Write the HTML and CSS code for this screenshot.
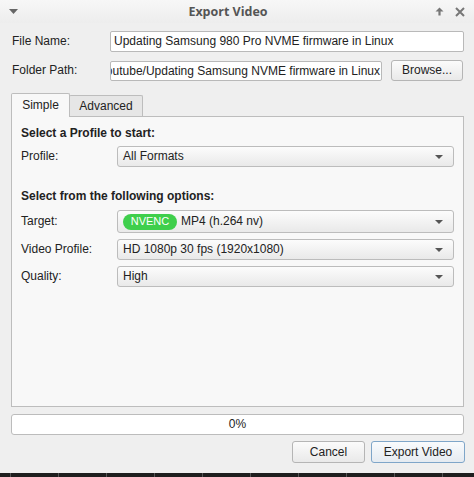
FILE: index.html
```html
<!DOCTYPE html>
<html>
<head>
<meta charset="utf-8">
<link rel="stylesheet" href="styles.css">
</head>
<body>
<div class="window">
  <div class="titlebar">
    <span class="tb-menu">
      <svg width="9" height="6" viewBox="0 0 9 6"><path d="M0 0 L9 0 L4.5 5 Z" fill="#666"/></svg>
    </span>
    <span class="tb-title">Export Video</span>
    <span class="tb-btns">
      <svg width="9" height="9" viewBox="0 0 9 9"><path d="M4.5 0.5 L8.5 4.5 L5.6 4.5 L5.6 8.5 L3.4 8.5 L3.4 4.5 L0.5 4.5 Z" fill="#777"/></svg>
      <svg width="10" height="10" viewBox="0 0 10 10"><path d="M1 1 L9 9 M9 1 L1 9" stroke="#777" stroke-width="2"/></svg>
    </span>
  </div>
  <div class="body">
    <div class="row r-file">
      <span class="lbl">File Name:</span>
      <div class="input wide">Updating Samsung 980 Pro NVME firmware in Linux</div>
    </div>
    <div class="row r-folder">
      <span class="lbl">Folder Path:</span>
      <div class="input path"><span class="path-text">outube/Updating Samsung NVME firmware in Linux</span></div>
      <div class="btn browse">Browse...</div>
    </div>
    <div class="tabs">
      <div class="tab active">Simple</div>
      <div class="tab">Advanced</div>
    </div>
    <div class="pane">
      <div class="heading h1">Select a Profile to start:</div>
      <div class="prow p-profile">
        <span class="plbl">Profile:</span>
        <div class="combo"><span>All Formats</span><i class="arrow"></i></div>
      </div>
      <div class="heading h2">Select from the following options:</div>
      <div class="prow p-target">
        <span class="plbl">Target:</span>
        <div class="combo tall"><span class="badge">NVENC</span><span>MP4 (h.264 nv)</span><i class="arrow"></i></div>
      </div>
      <div class="prow p-video">
        <span class="plbl">Video Profile:</span>
        <div class="combo"><span>HD 1080p 30 fps (1920x1080)</span><i class="arrow"></i></div>
      </div>
      <div class="prow p-quality">
        <span class="plbl">Quality:</span>
        <div class="combo"><span>High</span><i class="arrow"></i></div>
      </div>
    </div>
    <div class="progress">0%</div>
    <div class="buttons">
      <div class="btn cancel">Cancel</div>
      <div class="btn export">Export Video</div>
    </div>
  </div>
</div>
<div class="taskbar">
  <div class="seg first"></div><div class="seg"></div><div class="seg"></div><div class="seg"></div><div class="seg"></div><div class="seg"></div><div class="seg"></div><div class="seg"></div><div class="seg"></div><div class="seg"></div><div class="seg last"></div>
</div>
</body>
</html>
```

FILE: styles.css
```css
* { box-sizing: border-box; }
html, body { margin: 0; padding: 0; }
body {
  width: 474px;
  height: 477px;
  overflow: hidden;
  background: #efefef;
  font-family: "Liberation Sans", Arial, sans-serif;
  font-size: 12px;
  line-height: 15px;
  color: #222;
  display: flex;
  flex-direction: column;
}
.window { height: 473px; display: flex; flex-direction: column; }
.titlebar {
  height: 23px;
  display: flex;
  align-items: center;
  padding: 0 9px 0 9px;
  background: linear-gradient(#f7f7f7, #ededed);
}
.tb-menu { width: 30px; display: flex; padding-top: 1px; }
.tb-title {
  flex: 1;
  text-align: center;
  font-family: "Open Sans", "Noto Sans", sans-serif;
  font-weight: 700;
  font-size: 12.5px;
  color: #555;
  padding-right: 18px;
}
.tb-btns { width: 30px; display: flex; justify-content: space-between; align-items: center; gap: 10px; }
.body { padding: 8px 10px 0 11px; display: flex; flex-direction: column; flex: 1; }
.row { display: flex; align-items: center; }
.r-file { height: 21px; }
.r-folder { height: 23px; margin-top: 7px; }
.lbl { width: 99px; padding-left: 1px; }
.input {
  height: 21px;
  background: #fff;
  border: 1px solid #b9b9b9;
  border-radius: 2px;
  padding: 0 4px 0 3px;
  line-height: 19px;
  white-space: nowrap;
  overflow: hidden;
}
.wide { flex: 1; }
.path { width: 272px; height: 20px; line-height: 18px; direction: rtl; text-align: left; padding: 0 1px; }
.path-text { direction: ltr; unicode-bidi: embed; }
.btn {
  border: 1px solid #b5b5b5;
  border-radius: 3px;
  background: linear-gradient(#fbfbfb, #e9e9e9);
  display: flex;
  align-items: center;
  justify-content: center;
  color: #222;
}
.browse { width: 72px; height: 21px; margin-left: 9px; }
.tabs { display: flex; margin-top: 11px; height: 23px; align-items: flex-end; }
.tab {
  height: 21px;
  border: 1px solid #bdbdbd;
  border-bottom: none;
  border-radius: 2px 2px 0 0;
  background: #e6e6e6;
  padding: 0 10px;
  display: flex;
  align-items: center;
  width: 74px;
  justify-content: center;
  margin-left: -1px;
}
.tab.active {
  width: 59px;
  margin-left: 0;
  background: #f8f8f8;
  position: relative;
  z-index: 1;
  margin-bottom: -1px;
  height: 24px;
}
.pane {
  height: 291px;
  border: 1px solid #bdbdbd;
  background: #f8f8f8;
  padding: 0 9px 0 9px;
  display: flex;
  flex-direction: column;
}
.heading { font-weight: 700; }
.h1 { margin-top: 9px; }
.h2 { margin-top: 22px; }
.prow { display: flex; align-items: center; }
.plbl { width: 96px; }
.p-profile { margin-top: 5px; }
.p-target { margin-top: 6px; }
.p-video { margin-top: 6px; }
.p-quality { margin-top: 6px; }
.combo {
  flex: 1;
  height: 21px;
  border: 1px solid #bcbcbc;
  border-radius: 3px;
  background: linear-gradient(#fcfcfc, #e9e9e9);
  display: flex;
  align-items: center;
  padding: 0 10px 0 5px;
}
.combo.tall { height: 23px; padding-left: 5px; }
.combo span { flex: none; }
.arrow {
  margin-left: auto;
  width: 0; height: 0;
  border-left: 4px solid transparent;
  border-right: 4px solid transparent;
  border-top: 4px solid #555;
}
.badge {
  background: #3fcf4c;
  color: #fff;
  border-radius: 9px;
  height: 16px;
  width: 54px;
  display: flex;
  align-items: center;
  justify-content: center;
  font-size: 11px;
  margin-right: 4px;
}
.progress {
  margin-top: 7px;
  height: 21px;
  background: #fff;
  border: 1px solid #bcbcbc;
  border-radius: 3px;
  display: flex;
  align-items: center;
  justify-content: center;
}
.buttons { display: flex; justify-content: flex-end; margin-top: 6px; gap: 6px; }
.cancel { width: 73px; height: 22px; }
.export { width: 94px; height: 22px; border-color: #7fa6c9; background: linear-gradient(#f9fbfd, #e5ebf1); margin-right: -1px; }
.taskbar {
  height: 4px;
  background: #1e1e1e;
  display: flex;
}
.seg { width: 48px; border-left: 1px solid #555; flex: none; }
.seg.first { width: 10px; border-left: none; }
.seg.last { flex: 1; }
```
